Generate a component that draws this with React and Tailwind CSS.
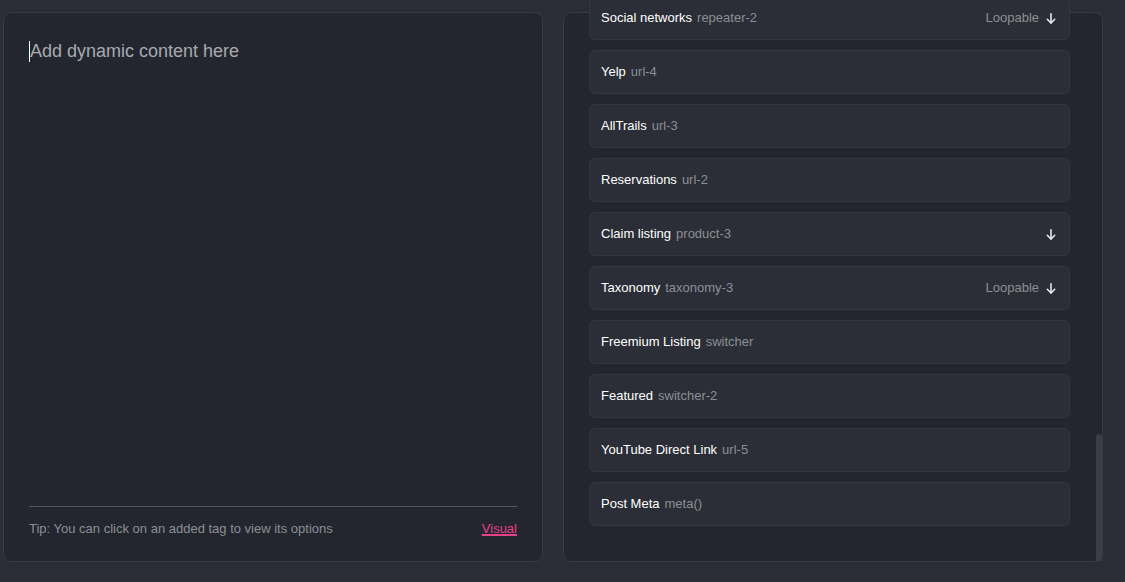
import React from "react";

const items = [
  { name: "Social networks", tag: "repeater-2", loop: true, arrow: true },
  { name: "Yelp", tag: "url-4" },
  { name: "AllTrails", tag: "url-3" },
  { name: "Reservations", tag: "url-2" },
  { name: "Claim listing", tag: "product-3", arrow: true },
  { name: "Taxonomy", tag: "taxonomy-3", loop: true, arrow: true },
  { name: "Freemium Listing", tag: "switcher" },
  { name: "Featured", tag: "switcher-2" },
  { name: "YouTube Direct Link", tag: "url-5" },
  { name: "Post Meta", tag: "meta()" },
];

function Arrow() {
  return (
    <svg width="10" height="11" viewBox="0 0 10 11" fill="none" stroke="#eef0f3" strokeWidth="1.5" strokeLinecap="round" strokeLinejoin="round">
      <path d="M5 0.8V10" />
      <path d="M1.3 6.3L5 10L8.7 6.3" />
    </svg>
  );
}

export default function App() {
  return (
    <div
      className="h-[582px] w-[1125px] overflow-hidden bg-[#2a2d35] pl-[3px] pt-[12px] flex gap-5"
      style={{ fontFamily: '"Liberation Sans", Arial, sans-serif' }}
    >
      {/* Left panel */}
      <div className="w-[540px] h-[550px] rounded-lg border border-[#383b42] bg-[#23262e] flex flex-col px-[25px]">
        <div className="flex-1 pt-[25px]">
          <div className="flex items-center leading-[27px] text-[18px] text-[#a7aab0]">
            <span className="inline-block w-px h-[21px] bg-white" />
            <span>Add dynamic content here</span>
          </div>
        </div>
        <div className="border-t border-[#55585f] pt-[12px] pb-[22px] flex items-center justify-between text-[13px] leading-[20px]">
          <span className="text-[#8b8e94]">Tip: You can click on an added tag to view its options</span>
          <span className="text-[#e6418b] underline decoration-2 underline-offset-[1px]">Visual</span>
        </div>
      </div>

      {/* Right panel */}
      <div className="relative w-[540px] h-[550px] rounded-lg border border-[#383b42] bg-[#23262e]">
        <div className="-mt-[17px] pl-[25px] pr-[32px] flex flex-col gap-[10px]">
          {items.map((it) => (
            <div
              key={it.name}
              className="h-[44px] rounded-md border border-[#34373e] bg-[#2b2e36] flex items-center justify-between pl-[11px] pr-[13px] text-[13px]"
            >
              <div className="flex items-center gap-[5px]">
                <span className="text-white">{it.name}</span>
                <span className="text-[#8b8e94]">{it.tag}</span>
              </div>
              {it.arrow && (
                <div className="flex items-center gap-[7px]">
                  {it.loop && <span className="text-[#8b8e94]">Loopable</span>}
                  <Arrow />
                </div>
              )}
            </div>
          ))}
        </div>
        <div className="absolute right-0 top-[421px] bottom-0 w-[6px] rounded-t-[3px] bg-[#3b3e45]" />
      </div>
    </div>
  );
}
